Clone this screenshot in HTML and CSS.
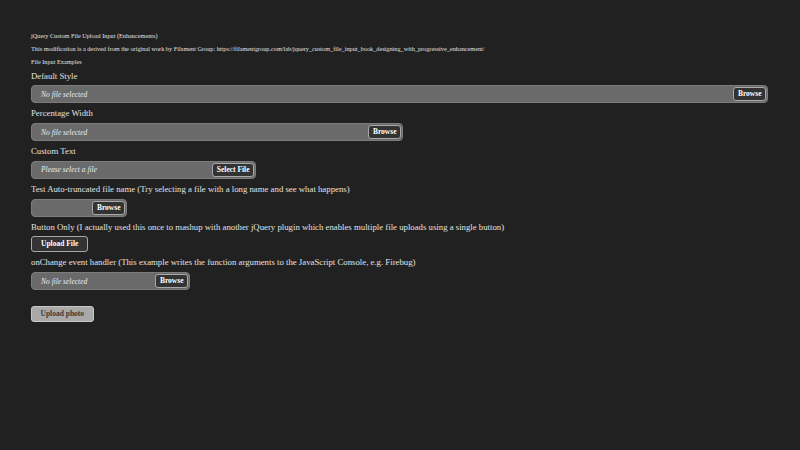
FILE: index.html
```html
<!DOCTYPE html>
<html>
<head>
<meta charset="utf-8">
<link rel="stylesheet" href="styles.css">
</head>
<body>
<div class="page">
  <p class="note">jQuery Custom File Upload Input (Enhancements)</p>
  <p class="note">This modification is a derived from the original work by Filament Group: https://filamentgroup.com/lab/jquery_custom_file_input_book_designing_with_progressive_enhancement/</p>
  <p class="note">File Input Examples</p>

  <div class="section">
    <div class="label">Default Style</div>
    <div class="upload full"><span class="feedback">No file selected</span><span class="btn">Browse</span></div>
  </div>
  <div class="section">
    <div class="label">Percentage Width</div>
    <div class="upload half"><span class="feedback">No file selected</span><span class="btn">Browse</span></div>
  </div>
  <div class="section">
    <div class="label">Custom Text</div>
    <div class="upload custom"><span class="feedback">Please select a file</span><span class="btn">Select File</span></div>
  </div>
  <div class="section">
    <div class="label">Test Auto-truncated file name (Try selecting a file with a long name and see what happens)</div>
    <div class="upload trunc"><span class="feedback"></span><span class="btn">Browse</span></div>
  </div>
  <div class="section">
    <div class="label">Button Only (I actually used this once to mashup with another jQuery plugin which enables multiple file uploads using a single button)</div>
    <div class="btn solo">Upload File</div>
  </div>
  <div class="section">
    <div class="label">onChange event handler (This example writes the function arguments to the JavaScript Console, e.g. Firebug)</div>
    <div class="upload change"><span class="feedback">No file selected</span><span class="btn">Browse</span></div>
  </div>
  <div class="submit">Upload photo</div>
</div>
</body>
</html>
```

FILE: styles.css
```css
html, body {
  margin: 0;
  background: #212121;
}
body {
  font-family: "Liberation Serif", "Times New Roman", serif;
  color: #e2e2e2;
}
.page {
  padding: 29px 0 0 31px;
}
.note {
  margin: 0;
  font-size: 6.25px;
  line-height: 13px;
}
.section {
  display: flex;
  flex-direction: column;
  align-items: flex-start;
}
.label {
  font-size: 8.75px;
  line-height: 12px;
  margin-top: 1.5px;
  margin-bottom: 3.75px;
}
.upload {
  box-sizing: border-box;
  height: 18px;
  background: #6a6a6a;
  border: 1px solid #7c7c7c;
  border-radius: 4px;
  display: flex;
  align-items: center;
  justify-content: space-between;
  padding: 0 1px 0 9px;
  margin-bottom: 2.5px;
}
.full { width: 737px; }
.half { width: 372px; }
.custom { width: 225px; }
.trunc { width: 96px; }
.change { width: 159px; }
.feedback {
  font-style: italic;
  font-size: 7.5px;
  color: #ececec;
}
.btn {
  box-sizing: border-box;
  height: 14px;
  padding: 0 3.5px;
  background: #333;
  border: 1px solid #a8a8a8;
  border-radius: 3px;
  color: #fff;
  font-weight: bold;
  font-size: 7.5px;
  line-height: 12px;
}
.solo {
  height: 16px;
  line-height: 14px;
  padding: 0 9px;
  margin-bottom: 2.5px;
}
.submit {
  display: inline-block;
  box-sizing: border-box;
  margin-top: 13px;
  height: 16px;
  line-height: 14px;
  padding: 0 8.5px;
  background: #a9a9a9;
  border: 1px solid #c8c8c8;
  border-radius: 3px;
  color: #3a3a3a;
  font-weight: bold;
  font-size: 7.5px;
}
```
